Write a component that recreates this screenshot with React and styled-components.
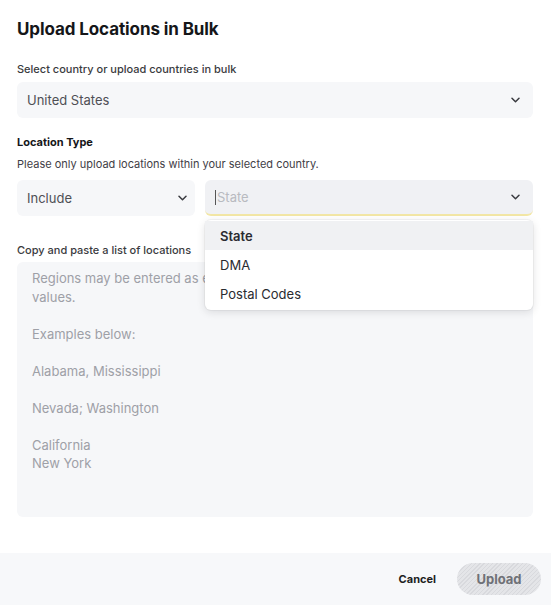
import React, { useState } from 'react';
import styled, { createGlobalStyle } from 'styled-components';

const GlobalStyle = createGlobalStyle`
  html, body {
    margin: 0;
    padding: 0;
    background: #ffffff;
  }
  body {
    font-family: Inter, "Noto Sans", "Liberation Sans", sans-serif;
    color: #1d1e22;
  }
  * { box-sizing: border-box; }
`;

const Modal = styled.div`
  width: 551px;
  height: 605px;
  display: flex;
  flex-direction: column;
  background: #fff;
`;

const Body = styled.div`
  flex: 1;
  padding: 18px 18px 0 17px;
  display: flex;
  flex-direction: column;
`;

const Title = styled.h1`
  margin: 0 0 22px;
  font-size: 17px;
  font-weight: 700;
  letter-spacing: -0.1px;
  line-height: 22px;
  color: #151619;
`;

const Label = styled.div`
  font-size: 11px;
  line-height: 14px;
  font-weight: ${(p) => (p.$strong ? 700 : 500)};
  color: ${(p) => (p.$strong ? '#151619' : '#3a3b40')};
  margin-bottom: ${(p) => p.$mb || 6}px;
`;

const Hint = styled.div`
  font-size: 11px;
  line-height: 14px;
  color: #3f4046;
  margin-bottom: 9px;
`;

const SelectBox = styled.div`
  position: relative;
  height: 36px;
  width: ${(p) => p.$width || 'auto'};
  flex: ${(p) => (p.$grow ? 1 : 'none')};
  display: flex;
  align-items: center;
  justify-content: space-between;
  padding: 0 ${(p) => p.$pr || 13}px 0 10px;
  background: ${(p) => (p.$focused ? '#f0f1f4' : '#f6f7f9')};
  border-radius: 6px;
  border-bottom: ${(p) => (p.$focused ? '2px solid #f3e7a6' : 'none')};
  font-size: 13px;
  color: #4e4f55;
`;

const Placeholder = styled.span`
  display: flex;
  align-items: center;
  color: #b8bac0;
  &::before {
    content: '';
    width: 1px;
    height: 15px;
    background: #555;
    margin-right: 1px;
  }
`;

const Section = styled.div`
  margin-bottom: ${(p) => p.$mb || 0}px;
`;

const Row = styled.div`
  position: relative;
  display: flex;
  gap: 10px;
  margin-bottom: 27px;
`;

const Menu = styled.ul`
  position: absolute;
  top: 40px;
  left: 188px;
  right: 0;
  margin: 0;
  padding: 1px 0 2px;
  list-style: none;
  background: #fff;
  border-radius: 6px;
  box-shadow: 0 2px 8px rgba(20, 22, 30, 0.13), 0 0 0 1px rgba(20, 22, 30, 0.04);
  z-index: 5;
`;

const Option = styled.li`
  height: 29px;
  padding: 0 15px;
  display: flex;
  align-items: center;
  font-size: 13px;
  font-weight: ${(p) => (p.$active ? 600 : 400)};
  color: #2a2b30;
  background: ${(p) => (p.$active ? '#f0f1f3' : 'transparent')};
`;

const TextArea = styled.div`
  height: 255px;
  background: #f6f7f9;
  border-radius: 6px;
  padding: 7px 15px;
  font-size: 13px;
  line-height: 18.5px;
  color: #9ea0a7;
  white-space: pre-line;
`;

const Footer = styled.div`
  height: 52px;
  background: #f7f8fa;
  display: flex;
  align-items: center;
  justify-content: flex-end;
  gap: 21px;
  padding-right: 10px;
`;

const CancelButton = styled.button`
  border: none;
  background: none;
  padding: 0;
  font-family: inherit;
  font-size: 11px;
  font-weight: 700;
  color: #1d1e22;
`;

const UploadButton = styled.button`
  width: 84px;
  height: 32px;
  border: none;
  border-radius: 16px;
  font-family: inherit;
  font-size: 13px;
  font-weight: 700;
  color: #6f7177;
  background: repeating-linear-gradient(
    -45deg,
    #e4e5e8 0px,
    #e4e5e8 2px,
    #d8d9dd 2px,
    #d8d9dd 3px
  );
`;

const Chevron = () => (
  <svg width="9" height="6" viewBox="0 0 9 6" fill="none">
    <path d="M1 1.2l3.5 3.5 3.5-3.5" stroke="#3a3b40" strokeWidth="1.5" strokeLinecap="round" strokeLinejoin="round" />
  </svg>
);

const exampleText = `Regions may be entered as either comma, semicolon or line separated
values.

Examples below:

Alabama, Mississippi

Nevada; Washington

California
New York`;

export default function App() {
  const [type] = useState('State');
  const options = ['State', 'DMA', 'Postal Codes'];

  return (
    <>
      <GlobalStyle />
      <Modal>
        <Body>
          <Title>Upload Locations in Bulk</Title>

          <Section $mb={17}>
            <Label>Select country or upload countries in bulk</Label>
            <SelectBox>
              <span>United States</span>
              <Chevron />
            </SelectBox>
          </Section>

          <Label $strong $mb={8}>Location Type</Label>
          <Hint>Please only upload locations within your selected country.</Hint>
          <Row>
            <SelectBox $width="178px" $pr={8}>
              <span>Include</span>
              <Chevron />
            </SelectBox>
            <SelectBox $grow $focused>
              <Placeholder>{type}</Placeholder>
              <Chevron />
            </SelectBox>
            <Menu>
              {options.map((o) => (
                <Option key={o} $active={o === type}>{o}</Option>
              ))}
            </Menu>
          </Row>

          <Label $mb={5}>Copy and paste a list of locations</Label>
          <TextArea>{exampleText}</TextArea>
        </Body>
        <Footer>
          <CancelButton>Cancel</CancelButton>
          <UploadButton>Upload</UploadButton>
        </Footer>
      </Modal>
    </>
  );
}
